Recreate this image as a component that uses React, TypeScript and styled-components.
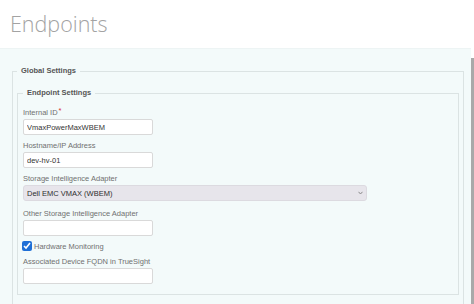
import styled, { createGlobalStyle } from 'styled-components';

const GlobalStyle = createGlobalStyle`
  html, body {
    margin: 0;
    padding: 0;
    background: #ffffff;
    font-family: "Liberation Sans", Arial, sans-serif;
    overflow: hidden;
  }
`;

const Header = styled.div`
  height: 48px;
  padding-left: 10px;
  box-sizing: border-box;
`;

const Title = styled.h1`
  margin: 0;
  padding-top: 7px;
  font-family: "Open Sans", sans-serif;
  font-weight: 300;
  font-size: 21.5px;
  line-height: 34px;
  color: #a3a3a3;
`;

const Body = styled.div`
  display: flex;
  height: 256px;
`;

const Panel = styled.div`
  flex: 1;
  overflow: hidden;
  background: #f3fafa;
  border-top: 1px solid #edf4f4;
  padding: 0 7px 0 12px;
`;

const ScrollBar = styled.div`
  width: 3px;
  margin-top: 10px;
  background: #a9a9a9;
`;

const Fieldset = styled.fieldset<{ $inset: number; $top: number; $pt: number; $pb: number }>`
  margin: ${(p) => p.$top}px 0 0 0;
  padding: ${(p) => p.$pt}px ${(p) => p.$inset}px ${(p) => p.$pb}px ${(p) => p.$inset}px;
  border: 1px solid #dbe3e3;
  min-width: 0;
`;

const Legend = styled.legend`
  padding: 0 4px;
  font-size: 7.5px;
  font-weight: bold;
  color: #555;
  line-height: 10px;
`;

const Field = styled.div<{ $gap?: number }>`
  display: flex;
  flex-direction: column;
  align-items: flex-start;
  margin-bottom: ${(p) => p.$gap ?? 5}px;
`;

const Label = styled.label`
  font-size: 7.5px;
  line-height: 12px;
  color: #707070;
`;

const Required = styled.span`
  color: #d83131;
  font-size: 7.5px;
  position: relative;
  top: -2px;
  margin-left: 1px;
`;

const TextInput = styled.input`
  box-sizing: border-box;
  width: 130px;
  height: 16px;
  margin: 0;
  padding: 0 3px;
  border: 1px solid #d9d9d9;
  border-radius: 2px;
  background: #fff;
  font-family: "Liberation Sans", Arial, sans-serif;
  font-size: 7.5px;
  color: #333;
  outline: none;
`;

const SelectWrap = styled.div`
  position: relative;
  width: 344px;
`;

const Select = styled.select`
  appearance: none;
  box-sizing: border-box;
  display: block;
  width: 100%;
  height: 16px;
  margin: 0;
  padding: 0 3px;
  border: 1px solid #dcdae0;
  border-radius: 3px;
  background: #e7e5eb;
  font-family: "Liberation Sans", Arial, sans-serif;
  font-size: 7.5px;
  color: #2e2e2e;
  outline: none;
`;

const Chevron = styled.svg`
  position: absolute;
  right: 4px;
  top: 6px;
  pointer-events: none;
`;

const CheckRow = styled.label`
  display: flex;
  align-items: center;
  gap: 2px;
  height: 10px;
  margin: 0 0 5px -1px;
  font-size: 7.5px;
  color: #707070;
`;

const Check = styled.input`
  width: 10px;
  height: 10px;
  margin: 0;
  accent-color: #1f6fd6;
`;

export default function App() {
  return (
    <>
      <GlobalStyle />
      <Header>
        <Title>Endpoints</Title>
      </Header>
      <Body>
        <Panel>
          <Fieldset $inset={4} $top={17} $pt={0} $pb={30}>
            <Legend>Global Settings</Legend>
            <Fieldset $inset={5} $top={12} $pt={9} $pb={10}>
              <Legend>Endpoint Settings</Legend>
              <Field>
                <Label>
                  Internal ID<Required>*</Required>
                </Label>
                <TextInput defaultValue="VmaxPowerMaxWBEM" />
              </Field>
              <Field>
                <Label>Hostname/IP Address</Label>
                <TextInput defaultValue="dev-hv-01" />
              </Field>
              <Field $gap={7}>
                <Label>Storage Intelligence Adapter</Label>
                <SelectWrap>
                  <Select defaultValue="vmax">
                    <option value="vmax">Dell EMC VMAX (WBEM)</option>
                  </Select>
                  <Chevron width="5" height="4" viewBox="0 0 5 4">
                    <path d="M0.5 0.8 L2.5 3 L4.5 0.8" fill="none" stroke="#8a8a8a" strokeWidth="1" />
                  </Chevron>
                </SelectWrap>
              </Field>
              <Field>
                <Label>Other Storage Intelligence Adapter</Label>
                <TextInput />
              </Field>
              <CheckRow>
                <Check type="checkbox" defaultChecked />
                Hardware Monitoring
              </CheckRow>
              <Field $gap={0}>
                <Label>Associated Device FQDN in TrueSight</Label>
                <TextInput />
              </Field>
            </Fieldset>
          </Fieldset>
        </Panel>
        <ScrollBar />
      </Body>
    </>
  );
}
